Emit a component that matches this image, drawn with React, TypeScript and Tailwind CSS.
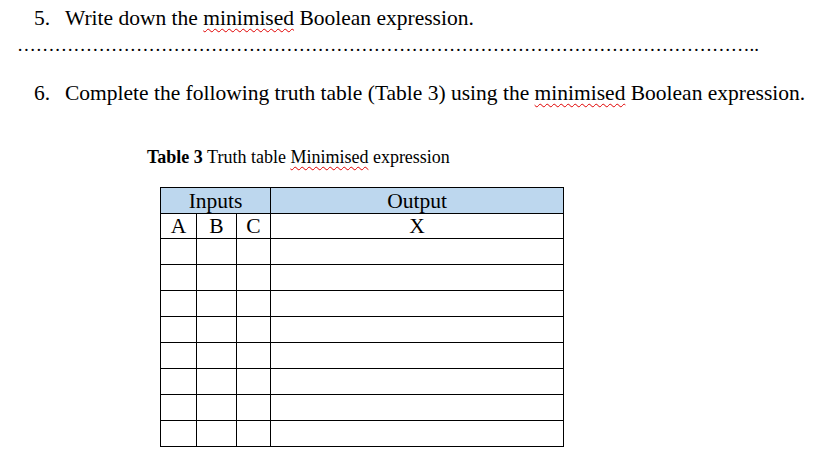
import React from 'react';

const serif = { fontFamily: '"Liberation Serif", "Times New Roman", serif' };

const Squiggle: React.FC<{ children: React.ReactNode }> = ({ children }) => (
  <span className="underline decoration-wavy decoration-[#e00000] decoration-1 underline-offset-[3px]">
    {children}
  </span>
);

const App: React.FC = () => {
  const rows = Array.from({ length: 8 });
  const dots = '…'.repeat(39) + '..';

  return (
    <div className="w-[822px] h-[467px] bg-white text-black overflow-hidden" style={serif}>
      {/* Question 5 */}
      <div className="flex pl-[34px] pt-[5px] text-[21.5px] leading-[26px] whitespace-nowrap">
        <span className="w-[31px]">5.</span>
        <span>
          Write down the <Squiggle>minimised</Squiggle> Boolean expression.
        </span>
      </div>
      <div className="pl-[17px] mt-[4px] text-[18.8px] leading-[20px] whitespace-nowrap">{dots}</div>

      {/* Question 6 */}
      <div className="flex pl-[34px] mt-[25px] text-[21.5px] leading-[26px] whitespace-nowrap">
        <span className="w-[31px]">6.</span>
        <span>
          Complete the following truth table (Table 3) using the <Squiggle>minimised</Squiggle> Boolean expression.
        </span>
      </div>

      {/* Caption */}
      <div className="pl-[147px] mt-[41px] text-[18px] leading-[20px] whitespace-nowrap">
        <span className="font-bold">Table 3</span> Truth table <Squiggle>Minimised</Squiggle> expression
      </div>

      {/* Truth table */}
      <table className="ml-[160px] mt-[20px] border-collapse text-[21.5px] leading-[24px]">
        <thead>
          <tr className="bg-[#bdd7ee] h-[26px]">
            <th colSpan={3} className="border border-black font-normal text-center p-0">
              Inputs
            </th>
            <th className="border border-black font-normal text-center p-0">Output</th>
          </tr>
          <tr className="h-[25px]">
            <th className="border border-black font-normal text-center p-0 w-[36px]">A</th>
            <th className="border border-black font-normal text-center p-0 w-[40px]">B</th>
            <th className="border border-black font-normal text-center p-0 w-[34px]">C</th>
            <th className="border border-black font-normal text-center p-0 w-[293px]">X</th>
          </tr>
        </thead>
        <tbody>
          {rows.map((_, i) => (
            <tr key={i} className="h-[26px]">
              <td className="border border-black p-0"></td>
              <td className="border border-black p-0"></td>
              <td className="border border-black p-0"></td>
              <td className="border border-black p-0"></td>
            </tr>
          ))}
        </tbody>
      </table>
    </div>
  );
};

export default App;
